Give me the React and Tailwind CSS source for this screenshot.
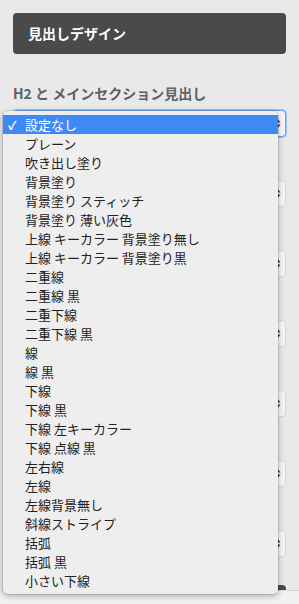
const items = [
  "設定なし",
  "プレーン",
  "吹き出し塗り",
  "背景塗り",
  "背景塗り スティッチ",
  "背景塗り 薄い灰色",
  "上線 キーカラー 背景塗り無し",
  "上線 キーカラー 背景塗り黒",
  "二重線",
  "二重線 黒",
  "二重下線",
  "二重下線 黒",
  "線",
  "線 黒",
  "下線",
  "下線 黒",
  "下線 左キーカラー",
  "下線 点線 黒",
  "左右線",
  "左線",
  "左線背景無し",
  "斜線ストライプ",
  "括弧",
  "括弧 黒",
  "小さい下線",
];

function Arrows() {
  return (
    <svg width="7" height="11" viewBox="0 0 7 11" className="text-[#333]">
      <path d="M3.5 0.5 L6.5 4.5 L0.5 4.5 Z" fill="currentColor" />
      <path d="M3.5 10.5 L6.5 6.5 L0.5 6.5 Z" fill="currentColor" />
    </svg>
  );
}

function SelectBox({ focused }) {
  return (
    <div
      className={
        focused
          ? "flex h-[27px] items-center justify-end rounded-[4px] border border-[#6aa3e8] bg-[#f6f6f6] pr-[4px] shadow-[0_0_0_1px_#9cc3f0]"
          : "flex h-[27px] items-center justify-end rounded-[4px] border border-[#d6d6d6] bg-[#f6f6f6] pr-[4px]"
      }
    >
      <Arrows />
    </div>
  );
}

export default function App() {
  return (
    <div
      className="relative h-[604px] w-[299px] overflow-hidden bg-[#e9e9e9]"
      style={{ fontFamily: '"Noto Sans CJK JP", "Noto Sans", sans-serif' }}
    >
      <div className="px-[13px] pt-[13px]">
        <div className="flex h-[41px] items-center rounded-[4px] bg-[#4a4a4a] pl-[15px] text-[14px] font-bold text-white">
          見出しデザイン
        </div>
        <div className="mt-[30px] text-[14px] leading-[18px] font-bold text-[#5b6066]">
          H2 と メインセクション見出し
        </div>
        <div className="mt-[8px] flex flex-col gap-[43px]">
          <SelectBox focused />
          <SelectBox />
          <SelectBox />
          <SelectBox />
          <SelectBox />
          <SelectBox />
          <SelectBox />
        </div>
        <div className="mt-[28px] h-[20px] rounded-[4px] bg-[#4a4a4a]" />
      </div>

      <div className="absolute bottom-0 left-0 h-[14px] w-full border-t border-[#d4d4d4] bg-[#f1f1f1]" />

      <div className="absolute left-[3px] top-[111px] w-[275px] rounded-[5px] bg-[#eeeeee] py-[4px] shadow-[0_2px_6px_rgba(0,0,0,0.3),0_0_0_1px_rgba(0,0,0,0.08)]">
        {items.map((label, i) => (
          <div
            key={label}
            className={
              i === 0
                ? "relative flex h-[19px] items-center bg-[#3d8af5] pl-[22px] text-[13px] text-white"
                : "relative flex h-[19px] items-center pl-[22px] text-[13px] text-[#222]"
            }
          >
            {i === 0 && (
              <span className="absolute left-[5px] top-0 text-[12px] leading-[19px] font-bold">
                ✓
              </span>
            )}
            {label}
          </div>
        ))}
      </div>
    </div>
  );
}
